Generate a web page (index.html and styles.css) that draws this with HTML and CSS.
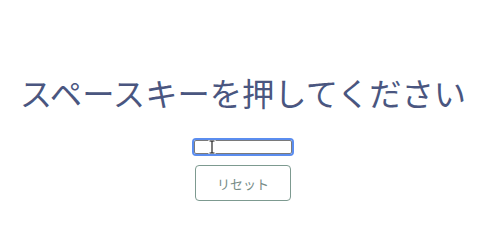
FILE: index.html
```html
<!DOCTYPE html>
<html lang="ja">
<head>
<meta charset="utf-8">
<link rel="stylesheet" href="styles.css">
</head>
<body>
<main class="page">
  <h1 class="title">スペースキーを押してください</h1>
  <div class="input-wrap">
    <input class="key-input" type="text" autofocus>
    <svg class="ibeam" width="8" height="14" viewBox="0 0 8 14" aria-hidden="true">
      <path d="M1.5 1h2l0.5 0.6L4.5 1h2M4 1.5v11M1.5 13h2l0.5-0.6L4.5 13h2" fill="none" stroke="#fff" stroke-width="2.4" stroke-linecap="round"/>
      <path d="M1.5 1h2l0.5 0.6L4.5 1h2M4 1.5v11M1.5 13h2l0.5-0.6L4.5 13h2" fill="none" stroke="#111" stroke-width="1.1"/>
    </svg>
  </div>
  <button class="reset" type="button">リセット</button>
</main>
</body>
</html>
```
FILE: styles.css
```css
html, body {
  margin: 0;
  padding: 0;
  background: #ffffff;
}
.page {
  box-sizing: border-box;
  width: 480px;
  height: 250px;
  padding-left: 6px;
  display: flex;
  flex-direction: column;
  align-items: center;
  font-family: "Noto Sans CJK JP", "Noto Sans", sans-serif;
}
.title {
  margin: 70px 0 0 0;
  font-size: 32.3px;
  font-weight: 400;
  line-height: 44px;
  color: #4a5680;
  white-space: nowrap;
}
.input-wrap {
  position: relative;
  margin-top: 26px;
  line-height: 0;
}
.key-input {
  box-sizing: border-box;
  width: 98px;
  height: 14px;
  padding: 0;
  border: 1px solid #7a7a7a;
  outline: 2px solid #5b8def;
  outline-offset: 0;
  border-radius: 2px;
  background: #fff;
}
.ibeam {
  position: absolute;
  left: 14px;
  top: 0;
}
.reset {
  margin-top: 11px;
  width: 96px;
  height: 36px;
  padding: 0;
  border: 1px solid #7d9a90;
  border-radius: 4px;
  background: #fff;
  color: #768c86;
  font-family: "Noto Sans CJK JP", "Noto Sans", sans-serif;
  font-size: 13px;
}
```
